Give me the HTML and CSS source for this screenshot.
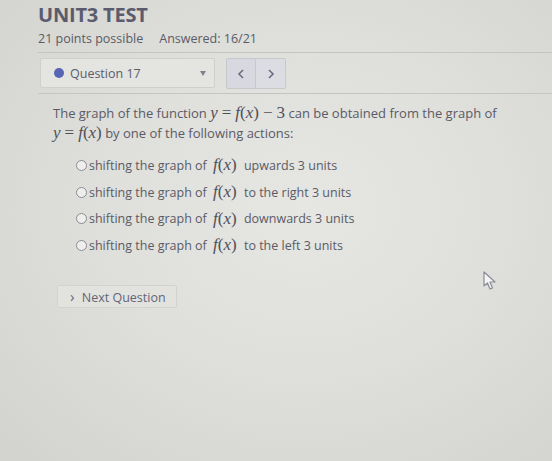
FILE: index.html
```html
<!DOCTYPE html>
<html>
<head>
<meta charset="utf-8">
<link rel="stylesheet" href="styles.css">
</head>
<body>
<div class="page">
  <h1 class="title">UNIT3 TEST</h1>
  <div class="meta"><span>21 points possible</span><span class="answered">Answered: 16/21</span></div>
  <div class="navbar">
    <div class="select"><span class="dot"></span><span class="qlabel">Question 17</span><span class="caret"></span></div>
    <div class="pager">
      <span class="pbtn"><svg width="8" height="10" viewBox="0 0 8 10"><path d="M6 1 L2 5 L6 9" fill="none" stroke="#6a6d80" stroke-width="1.6"/></svg></span>
      <span class="pbtn"><svg width="8" height="10" viewBox="0 0 8 10"><path d="M2 1 L6 5 L2 9" fill="none" stroke="#6a6d80" stroke-width="1.6"/></svg></span>
    </div>
  </div>
  <div class="question">
    <p class="stem">The graph of the function <span class="m"><i>y</i><span class="op">=</span><i>f</i>(<i>x</i>)<span class="op">&minus;</span>3</span> can be obtained from the graph of<br><span class="m"><i>y</i><span class="op">=</span><i>f</i>(<i>x</i>)</span> by one of the following actions:</p>
    <ul class="opts">
      <li><span class="radio"></span>shifting the graph of <span class="m"><i>f</i>(<i>x</i>)</span> upwards 3 units</li>
      <li><span class="radio"></span>shifting the graph of <span class="m"><i>f</i>(<i>x</i>)</span> to the right 3 units</li>
      <li><span class="radio"></span>shifting the graph of <span class="m"><i>f</i>(<i>x</i>)</span> downwards 3 units</li>
      <li><span class="radio"></span>shifting the graph of <span class="m"><i>f</i>(<i>x</i>)</span> to the left 3 units</li>
    </ul>
    <div class="nextrow">
      <span class="next"><span class="chev">&rsaquo;</span> Next Question</span>
      <svg class="cursor" width="14" height="20" viewBox="0 0 14 20"><path d="M1 1 L1 15 L4.5 12 L7 18 L9.5 17 L7 11 L12 11 Z" fill="#f4f4f2" stroke="#8a8c98" stroke-width="1.2" stroke-linejoin="round"/></svg>
    </div>
  </div>
</div>
</body>
</html>
```
FILE: styles.css
```css
html, body { margin: 0; padding: 0; }
body {
  width: 552px; height: 461px; overflow: hidden;
  background: radial-gradient(ellipse at 55% 45%, #e6e6e2 0%, #dfdfdb 45%, #d2d2ce 100%);
  font-family: "Open Sans", "Lato", sans-serif;
  color: #5e5f6b;
}
.page { padding: 3px 0 0 38px; }
.title {
  margin: 0; font-size: 20px; font-weight: 700; color: #5b5b6e;
  letter-spacing: -0.2px; line-height: 24px;
}
.meta { margin-top: 4px; font-size: 12.5px; color: #5a5b67; line-height: 16px; }
.answered { margin-left: 16px; }
.navbar {
  margin-top: 5px; border-top: 1px solid #c4c4c4; border-bottom: 1px solid #c4c4c4;
  padding: 5px 0 4px 2px; display: flex; gap: 11px;
}
.select {
  width: 175px; height: 30px; border: 1px solid #cfcfcf; border-radius: 2px;
  background: #e4e4e1; display: flex; align-items: center; box-sizing: border-box;
  padding: 0 8px 0 13px;
}
.dot { width: 10px; height: 10px; border-radius: 50%; background: #5865b5; }
.qlabel { margin-left: 6px; font-size: 12.5px; color: #5a5c6a; flex: 1; }
.caret { width: 0; height: 0; border-left: 3.5px solid transparent; border-right: 3.5px solid transparent; border-top: 5px solid #7f818c; }
.pager { display: flex; height: 31px; }
.pbtn {
  width: 30px; height: 31px; box-sizing: border-box; border: 1px solid #c8c8cc;
  background: #d8d9e0; display: flex; align-items: center; justify-content: center;
}
.pbtn:first-child { border-radius: 2px 0 0 2px; }
.pbtn:last-child { border-left: none; border-radius: 0 2px 2px 0; background: #dcdde3; }
.question { padding: 9px 0 0 15px; }
.stem { margin: 0; font-size: 13px; line-height: 19px; color: #5a5b66; }
.m { font-family: "Liberation Serif", "DejaVu Serif", serif; font-size: 17px; color: #4f5059; }
.m i { font-style: italic; }
.op { margin: 0 4px; }
.opts { list-style: none; margin: 9px 0 0 0; padding: 0 0 0 23px; }
.opts li { height: 26.7px; font-size: 12.5px; color: #5a5b66; display: flex; align-items: center; white-space: pre; }
.opts li .m { margin: 0 4px 0 3px; }
.radio {
  width: 9px; height: 9px; border: 1.3px solid #8a8c94; border-radius: 50%;
  background: #eeeeec; margin-right: 2px;
}
.nextrow { margin-top: 26px; display: flex; align-items: flex-start; padding-left: 4px; }
.next {
  display: inline-block; width: 120px; height: 23px; box-sizing: border-box;
  border: 1px solid #d2d2d2; background: #e2e2df; border-radius: 2px;
  font-size: 12.5px; line-height: 21px; padding-left: 12px; color: #646677;
}
.chev { font-size: 15px; margin-right: 4px; }
.cursor { margin-left: 306px; margin-top: -14px; }
```
